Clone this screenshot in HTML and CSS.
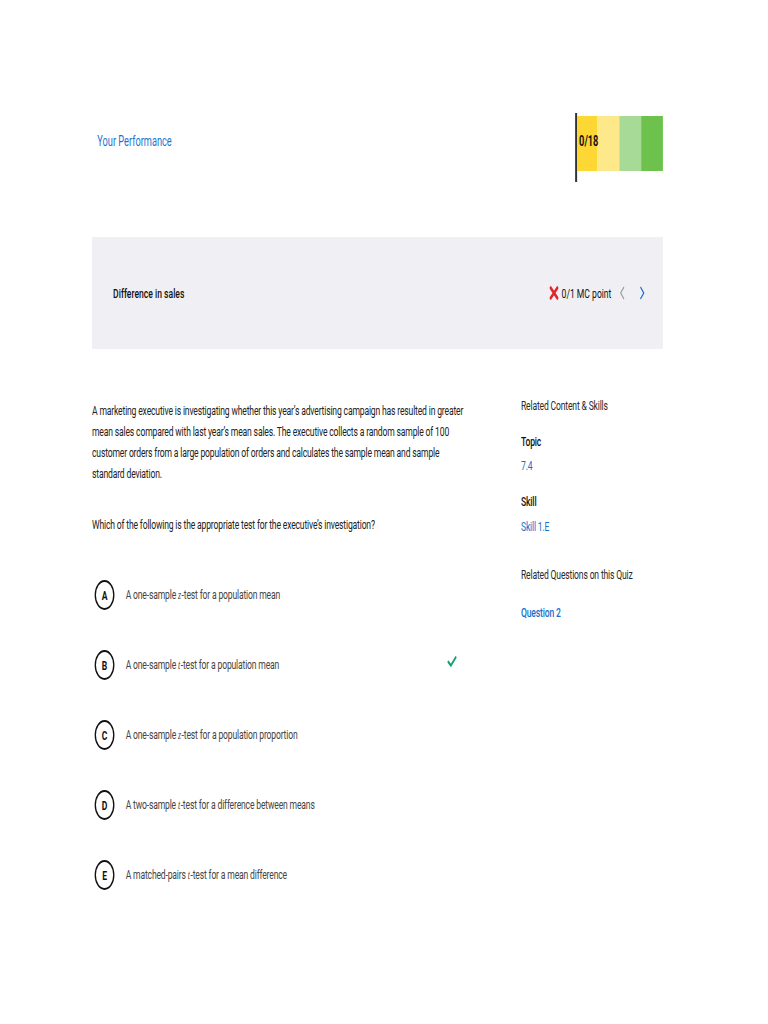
FILE: index.html
```html
<!DOCTYPE html>
<html lang="en">
<head>
<meta charset="utf-8">
<title>Difference in sales</title>
<link rel="stylesheet" href="styles.css">
</head>
<body>
<div class="frame">
<div class="page">
	<div class="perf">
		<a href="" class="perf_title">Your Performance</a>
		<div class="score">
			<div class="bar">
				<span class="seg s1"></span>
				<span class="seg s2"></span>
				<span class="seg s3"></span>
				<span class="seg s4"></span>
			</div>
			<span class="score_num">0/18</span>
		</div>
	</div>

	<div class="q_head">
		<h2>Difference in sales</h2>
		<div class="q_result">
			<svg class="x_icon" width="14" height="14" viewBox="0 0 14 14"><path d="M2 2 L12 12 M12 2 L2 12" stroke="#e0252b" stroke-width="3.2" stroke-linecap="square"/></svg>
			<span>0/1 MC point</span>
			<a href="" class="nav prev"><svg width="9" height="14" viewBox="0 0 9 14"><path d="M7 1 L2 7 L7 13" fill="none" stroke="#9a9a9a" stroke-width="1.5"/></svg></a>
			<a href="" class="nav next"><svg width="9" height="14" viewBox="0 0 9 14"><path d="M2 1 L7 7 L2 13" fill="none" stroke="#1b74cf" stroke-width="1.7"/></svg></a>
		</div>
	</div>

	<div class="main">
		<div class="question">
			<p class="stem">A marketing executive is investigating whether this year’s advertising campaign has resulted in greater mean sales compared with last year’s mean sales. The executive collects a random sample of 100 customer orders from a large population of orders and calculates the sample mean and sample standard deviation.</p>
			<p class="ask">Which of the following is the appropriate test for the executive’s investigation?</p>
			<ul class="options">
				<li><span class="letter">A</span><span class="opt_text">A one-sample <i>z</i>-test for a population mean</span></li>
				<li><span class="letter">B</span><span class="opt_text">A one-sample <i>t</i>-test for a population mean</span>
					<svg class="check" width="15" height="11" viewBox="0 0 15 11"><path d="M2 6 L5.8 9.5 L13 1.5" fill="none" stroke="#17a06b" stroke-width="2.6" stroke-linecap="round" stroke-linejoin="round"/></svg></li>
				<li><span class="letter">C</span><span class="opt_text">A one-sample <i>z</i>-test for a population proportion</span></li>
				<li><span class="letter">D</span><span class="opt_text">A two-sample <i>t</i>-test for a difference between means</span></li>
				<li><span class="letter">E</span><span class="opt_text">A matched-pairs <i>t</i>-test for a mean difference</span></li>
			</ul>
		</div>
		<div class="side">
			<p class="side_head">Related Content &amp; Skills</p>
			<p class="side_label">Topic</p>
			<a href="" class="side_link">7.4</a>
			<p class="side_label skill">Skill</p>
			<a href="" class="side_link">Skill 1.E</a>
			<p class="side_head related">Related Questions on this Quiz</p>
			<a href="" class="side_link question_link">Question 2</a>
		</div>
	</div>
</div>
</div>
</body>
</html>
```

FILE: styles.css
```css
* {margin:0; padding:0}
li {list-style: none}
a {text-decoration: none}

body {
	font-family: Roboto, "Liberation Sans", sans-serif;
	color: #222;
	background: #fff;
}

.frame {
	width: 571px;
	margin-left: 92px;
	overflow: hidden;
}

/* the whole page is drawn narrow: 571px on screen = 865px of layout */
.page {
	width: 865px;
	padding-top: 113px;
	padding-bottom: 60px;
	transform: scaleX(0.66);
	transform-origin: left top;
}

/* performance header */
.perf {
	display: flex;
	justify-content: space-between;
	align-items: flex-start;
	height: 69px;
}
.perf_title {
	margin: 20px 0 0 8px;
	line-height: 16px;
	color: #1b74cf;
	font-size: 14px;
}
.score {
	position: relative;
	height: 69px;
	border-left: 3px solid #333;
}
.bar {
	display: flex;
	margin-top: 3px;
}
.seg {
	display: block;
	width: 33px;
	height: 55px;
}
.s1 {background-color: #fdd734; width: 31px}
.s2 {background-color: #fee98a}
.s3 {background-color: #a8da97}
.s4 {background-color: #6cc24c}
.score_num {
	position: absolute;
	left: 3px;
	top: 20px;
	line-height: 16px;
	font-size: 14px;
	font-weight: bold;
	color: #111;
}

/* question header box */
.q_head {
	display: flex;
	justify-content: space-between;
	align-items: center;
	height: 112px;
	margin-top: 55px;
	padding: 0 27px 0 32px;
	background-color: #f0eff4;
}
.q_head h2 {
	font-size: 13px;
	font-weight: 500;
	color: #111;
}
.q_result {
	display: flex;
	align-items: center;
	font-size: 13px;
	color: #111;
}
.x_icon {margin-right: 4px}
.nav {
	display: flex;
	margin-left: 12px;
}
.nav.next {
	margin-left: 21px;
}

/* main */
.main {
	display: flex;
	justify-content: space-between;
	padding-top: 47px;
	letter-spacing: -0.25px;
}
.question {
	width: 572px;
}
.stem {
	margin-top: 4px;
	font-size: 13px;
	line-height: 21px;
	color: #222;
}
.ask {
	margin-top: 30px;
	font-size: 13px;
	line-height: 21px;
	color: #222;
}
.options {
	margin-top: 25px;
}
.options li {
	display: flex;
	align-items: center;
	height: 70px;
	position: relative;
}
.letter {
	display: flex;
	align-items: center;
	justify-content: center;
	width: 26px;
	height: 26px;
	margin-left: 4px;
	border: 2px solid #111;
	border-radius: 50%;
	font-size: 13px;
	font-weight: bold;
	color: #111;
	letter-spacing: 0;
}
.opt_text {
	margin-left: 17px;
	font-size: 13px;
	color: #444;
}
.opt_text i {
	font-family: "Liberation Serif", serif;
	font-size: 12px;
	padding-right: 1px;
}
.check {
	position: absolute;
	left: 538px;
	top: 26px;
}

.side {
	width: 215px;
	display: flex;
	flex-direction: column;
	align-items: flex-start;
	font-size: 13px;
	line-height: 20px;
}
.side_head {
	color: #2a2a2a;
}
.side_label {
	margin-top: 16px;
	font-weight: 500;
	color: #111;
}
.side_link {
	margin-top: 4px;
	color: #1a6fca;
}
.side_label.skill {
	margin-top: 16px;
}
.side_label.skill + .side_link {
	margin-top: 5px;
}
.side_head.related {
	margin-top: 28px;
}
.question_link {
	margin-top: 18px;
	font-weight: 500;
}
```
